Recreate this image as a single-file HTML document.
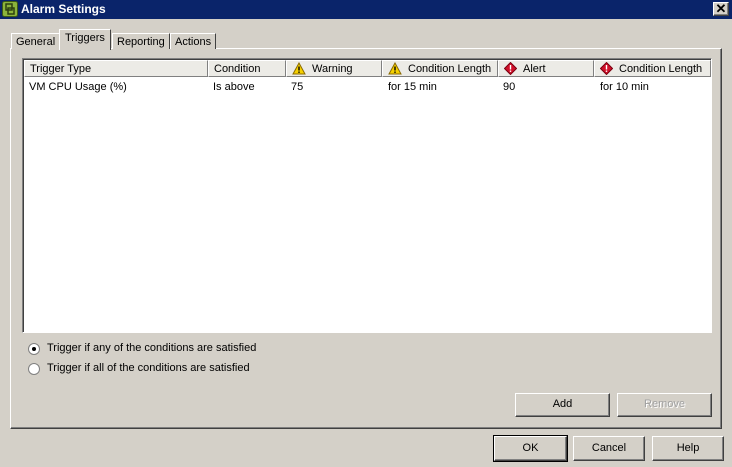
<html><head><style>
body{margin:0;width:732px;height:467px;background:#d4d0c8;font-family:"Liberation Sans",Tahoma,sans-serif;font-size:11px;color:#000;position:relative;overflow:hidden}
.a{position:absolute}
.title{left:0;top:0;width:732px;height:19px;background:#0a246a;color:#fff;font-weight:bold;font-size:12px}
.btn{background:#d4d0c8;text-align:center;box-sizing:border-box;border:1px solid;border-color:#fff #404040 #404040 #fff;box-shadow:inset -1px -1px #808080;line-height:20px}
.hd{top:60px;height:17px;box-sizing:border-box;border:1px solid;border-color:#fff #808080 #808080 #fff;background:#ecebe6;padding-left:5px;display:flex;align-items:center}
.cell{top:80px;line-height:14px}
.tab{top:31px;height:17px;border:1px solid;border-color:#fff #404040 transparent #fff;border-bottom:none;line-height:16px;padding:0 4px;background:#d4d0c8}
.warn{display:block;margin-right:6px;flex:none}
</style></head><body>
<div class="a title"><svg class="a" style="left:2px;top:1px" width="16" height="16"><rect x="0.5" y="0.5" width="15" height="15" rx="2" fill="#8cb43c" stroke="#3d5a14"/><rect x="4" y="3" width="6" height="6" fill="none" stroke="#2d4010" stroke-width="1.5"/><rect x="6" y="7" width="6" height="6" fill="none" stroke="#2d4010" stroke-width="1.5"/></svg><span class="a" style="left:21px;top:2px">Alarm Settings</span>
<div class="a btn" style="left:713px;top:2px;width:16px;height:14px;line-height:12px;font-size:13px;font-weight:bold;color:#000">✕</div></div>
<div class="a" style="left:10px;top:48px;width:710px;height:379px;border:1px solid;border-color:#fff #404040 #404040 #fff;box-shadow:inset -1px -1px #808080"></div>
<div class="a tab" style="left:11px;top:33px;height:15px">General</div>
<div class="a tab" style="left:112px;top:33px;height:15px">Reporting</div>
<div class="a tab" style="left:170px;top:33px;height:15px">Actions</div>
<div class="a tab" style="left:59px;top:29px;height:20px;padding:0 5px;z-index:2">Triggers</div>
<div class="a" style="left:22px;top:58px;width:688px;height:273px;background:#fff;border:1px solid;border-color:#808080 #fff #fff #808080;box-shadow:inset 1px 1px #404040"></div>
<div class="a hd" style="left:24px;width:184px">Trigger Type</div>
<div class="a hd" style="left:208px;width:78px">Condition</div>
<div class="a hd" style="left:286px;width:96px"><svg class="warn" width="14" height="13"><path d="M7 1L13 12H1Z" fill="#f5d000" stroke="#8a6a00"/><rect x="6.3" y="4.5" width="1.4" height="4" fill="#000"/><rect x="6.3" y="9.5" width="1.4" height="1.4" fill="#000"/></svg>Warning</div>
<div class="a hd" style="left:382px;width:116px"><svg class="warn" width="14" height="13"><path d="M7 1L13 12H1Z" fill="#f5d000" stroke="#8a6a00"/><rect x="6.3" y="4.5" width="1.4" height="4" fill="#000"/><rect x="6.3" y="9.5" width="1.4" height="1.4" fill="#000"/></svg>Condition Length</div>
<div class="a hd" style="left:498px;width:96px"><svg class="warn" width="13" height="13"><path d="M6.5 0.5L12.5 6.5L6.5 12.5L0.5 6.5Z" fill="#d0102a" stroke="#7a0010"/><rect x="5.8" y="3" width="1.4" height="4.5" fill="#fff"/><rect x="5.8" y="8.5" width="1.4" height="1.4" fill="#fff"/></svg>Alert</div>
<div class="a hd" style="left:594px;width:117px"><svg class="warn" width="13" height="13"><path d="M6.5 0.5L12.5 6.5L6.5 12.5L0.5 6.5Z" fill="#d0102a" stroke="#7a0010"/><rect x="5.8" y="3" width="1.4" height="4.5" fill="#fff"/><rect x="5.8" y="8.5" width="1.4" height="1.4" fill="#fff"/></svg>Condition Length</div>
<div class="a cell" style="left:29px">VM CPU Usage (%)</div>
<div class="a cell" style="left:213px">Is above</div>
<div class="a cell" style="left:291px">75</div>
<div class="a cell" style="left:388px">for 15 min</div>
<div class="a cell" style="left:503px">90</div>
<div class="a cell" style="left:600px">for 10 min</div>
<svg class="a" style="left:28px;top:343px" width="12" height="12"><circle cx="6" cy="6" r="5.5" fill="#fff" stroke="#808080"/><circle cx="6" cy="6" r="2" fill="#000"/></svg>
<div class="a" style="left:47px;top:342px">Trigger if any of the conditions are satisfied</div>
<svg class="a" style="left:28px;top:363px" width="12" height="12"><circle cx="6" cy="6" r="5.5" fill="#fff" stroke="#808080"/></svg>
<div class="a" style="left:47px;top:362px">Trigger if all of the conditions are satisfied</div>
<div class="a btn" style="left:515px;top:393px;width:95px;height:24px">Add</div>
<div class="a btn" style="left:617px;top:393px;width:95px;height:24px;color:#a0a0a0;text-shadow:1px 1px #fff">Remove</div>
<div class="a btn" style="left:494px;top:436px;width:73px;height:25px;outline:1px solid #000;line-height:22px">OK</div>
<div class="a btn" style="left:573px;top:436px;width:72px;height:25px;line-height:23px">Cancel</div>
<div class="a btn" style="left:652px;top:436px;width:72px;height:25px;line-height:23px">Help</div>
</body></html>
